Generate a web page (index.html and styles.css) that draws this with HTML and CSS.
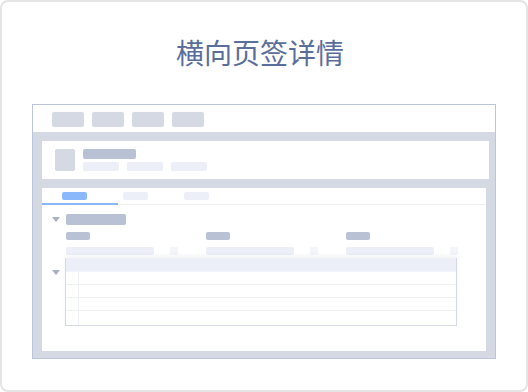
FILE: index.html
```html
<!DOCTYPE html>
<html lang="zh">
<head>
<meta charset="utf-8">
<link rel="stylesheet" href="styles.css">
</head>
<body>
<div class="card">
  <div class="title">横向页签详情</div>
  <div class="window">
    <div class="topbar">
      <span class="btn"></span><span class="btn"></span><span class="btn"></span><span class="btn"></span>
    </div>
    <div class="body">
      <div class="panel head-panel">
        <div class="avatar"></div>
        <div class="info">
          <div class="name"></div>
          <div class="subs"><span class="sub"></span><span class="sub"></span><span class="sub"></span></div>
        </div>
      </div>
      <div class="panel main-panel">
        <div class="tabs">
          <div class="tab active"><span class="tab-bar"></span></div>
          <div class="tab t2"><span class="tab-bar"></span></div>
          <div class="tab t3"><span class="tab-bar"></span></div>
        </div>
        <div class="section">
          <div class="sec-head"><span class="tri"></span><span class="sec-title"></span></div>
          <div class="fields">
            <div class="field"><span class="label"></span><div class="input-row"><span class="input"></span><span class="mini"></span></div></div>
            <div class="field"><span class="label"></span><div class="input-row"><span class="input"></span><span class="mini"></span></div></div>
            <div class="field"><span class="label"></span><div class="input-row"><span class="input"></span><span class="mini"></span></div></div>
          </div>
        </div>
        <div class="section2">
          <span class="tri tri2"></span>
          <div class="table">
            <div class="thead"></div>
            <div class="row r1"><span class="cell-a"></span></div>
            <div class="row r2"><span class="cell-a"></span></div>
            <div class="row r3"><span class="cell-a"></span></div>
            <div class="row r4"><span class="cell-a"></span></div>
          </div>
        </div>
      </div>
    </div>
  </div>
</div>
</body>
</html>
```
FILE: styles.css
```css
* { box-sizing: border-box; }
html, body { margin: 0; padding: 0; background: #ffffff; }
.card {
  width: 528px;
  height: 392px;
  border: 2px solid #e5e5e5;
  border-radius: 8px;
  background: #fff;
  padding: 36px 30px 0 30px;
}
.title {
  font-family: "Noto Sans CJK SC", sans-serif;
  font-size: 28px;
  line-height: 28px;
  color: #5a6e9c;
  text-align: center;
  padding-right: 8px;
}
.window {
  margin-top: 38px;
  width: 464px;
  height: 255px;
  border: 1px solid #bac4da;
  display: flex;
  flex-direction: column;
}
.topbar {
  height: 27px;
  background: #fff;
  display: flex;
  gap: 8px;
  padding: 7px 0 0 19px;
}
.btn {
  width: 32px;
  height: 15px;
  border-radius: 2px;
  background: #d5d9e3;
}
.body {
  flex: 1;
  background: #d5d9e3;
  padding: 9px 0 0 9px;
  display: flex;
  flex-direction: column;
  gap: 9px;
}
.panel { background: #fff; }
.head-panel {
  width: 447px;
  height: 38px;
  display: flex;
  gap: 8px;
  padding: 8px 0 0 13px;
}
.avatar {
  width: 20px;
  height: 22px;
  border-radius: 2px;
  background: #d5d9e3;
}
.info { display: flex; flex-direction: column; gap: 3px; }
.name {
  width: 53px;
  height: 10px;
  border-radius: 2px;
  background: #b9c1d4;
}
.subs { display: flex; gap: 8px; }
.sub {
  width: 36px;
  height: 9px;
  border-radius: 2px;
  background: #eceff7;
}
.main-panel {
  width: 444px;
  height: 163px;
}
.tabs {
  display: flex;
  height: 17px;
  border-bottom: 1px solid #eceff4;
}
.tab { height: 16px; padding-top: 4px; }
.tab-bar {
  display: block;
  width: 25px;
  height: 8px;
  border-radius: 2px;
  background: #eceff7;
}
.tab.active {
  width: 76px;
  padding-left: 20px;
  box-shadow: inset 0 -2px 0 #8ab6f8;
  height: 17px;
}
.tab.active .tab-bar { background: #8ab8fa; }
.tab.t2 { margin-left: 5px; }
.tab.t3 { margin-left: 36px; }
.section { padding: 9px 0 0 10px; }
.sec-head { display: flex; align-items: center; gap: 6px; height: 11px; }
.tri {
  width: 0;
  height: 0;
  border-left: 4px solid transparent;
  border-right: 4px solid transparent;
  border-top: 5px solid #a9b0c3;
}
.sec-title {
  width: 60px;
  height: 11px;
  border-radius: 2px;
  background: #b9c1d4;
}
.fields {
  display: flex;
  gap: 28px;
  padding: 7px 0 0 14px;
}
.field { display: flex; flex-direction: column; gap: 7px; }
.label {
  width: 24px;
  height: 8px;
  border-radius: 2px;
  background: #b9c1d4;
}
.input-row { display: flex; gap: 16px; }
.input {
  width: 88px;
  height: 8px;
  border-radius: 2px;
  background: #eceff7;
}
.mini {
  width: 8px;
  height: 8px;
  border-radius: 1px;
  background: #f4f5f9;
}
.section2 {
  display: flex;
  padding: 3px 0 0 10px;
}
.tri2 { margin-top: 12px; }
.table {
  margin-left: 5px;
  width: 392px;
  height: 68px;
  border: 1px solid #d5d9e3;
  border-top: none;
  box-shadow: 0 -3px 4px rgba(120, 130, 160, 0.08);
  display: flex;
  flex-direction: column;
}
.thead { height: 14px; background: #eceff7; border-bottom: 1px solid #f3f4f9; }
.row { border-bottom: 1px solid #eef0f6; display: flex; }
.row:last-child { border-bottom: none; flex: 1; }
.r1 { height: 13px; }
.r2 { height: 13px; }
.r3 { height: 13px; }
.cell-a { width: 13px; border-right: 1px solid #eef0f6; }
```
